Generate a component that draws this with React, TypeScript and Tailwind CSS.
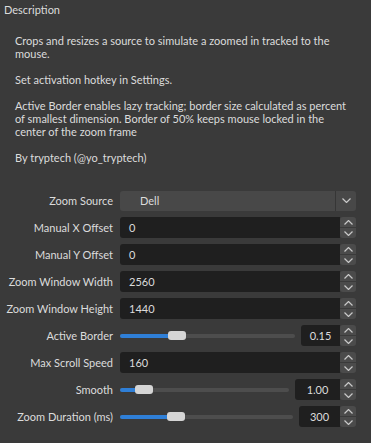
import React from "react"

const descLines: string[][] = [
  ["Crops and resizes a source to simulate a zoomed in tracked to the", "mouse."],
  ["Set activation hotkey in Settings."],
  [
    "Active Border enables lazy tracking; border size calculated as percent",
    "of smallest dimension. Border of 50% keeps mouse locked in the",
    "center of the zoom frame",
  ],
  ["By tryptech (@yo_tryptech)"],
]

function Chevron({ up }: { up?: boolean }) {
  return (
    <svg width="9" height="5" viewBox="0 0 9 5" className="block">
      <polyline
        points={up ? "0.5,4.5 4.5,0.5 8.5,4.5" : "0.5,0.5 4.5,4.5 8.5,0.5"}
        fill="none"
        stroke="#c9c9c9"
        strokeWidth="1.2"
      />
    </svg>
  )
}

function SpinButtons() {
  return (
    <div className="flex flex-col w-[16px] h-[21px] gap-[1px]">
      <div className="flex-1 bg-[#4b4b4b] rounded-t-[3px] flex items-center justify-center">
        <Chevron up />
      </div>
      <div className="flex-1 bg-[#4b4b4b] rounded-b-[3px] flex items-center justify-center">
        <Chevron />
      </div>
    </div>
  )
}

function Row({ label, children }: { label: string; children: React.ReactNode }) {
  return (
    <div className="flex items-center h-[21px]">
      <div className="w-[113px] text-right whitespace-nowrap">{label}</div>
      <div className="ml-[7px] w-[236px] flex items-center h-full">{children}</div>
    </div>
  )
}

function SpinBox({ value }: { value: string }) {
  return (
    <>
      <div className="flex-1 h-full bg-[#1f1f1f] rounded-l-[3px] flex items-center pl-[9px]">{value}</div>
      <SpinButtons />
    </>
  )
}

function SliderRow({ value, boxWidth, pos }: { value: string; boxWidth: number; pos: number }) {
  return (
    <>
      <div className="flex-1 relative h-full flex items-center">
        <div className="w-full h-[4px] rounded-full bg-[#4d4d4d]" />
        <div className="absolute left-0 h-[4px] rounded-l-full bg-[#2f7fd7]" style={{ width: pos + 2 }} />
        <div
          className="absolute h-[9px] w-[18px] rounded-[3px] bg-[#d5d5d5]"
          style={{ left: pos }}
        />
      </div>
      <div
        className="ml-[6px] h-full bg-[#1f1f1f] rounded-l-[3px] flex items-center justify-center"
        style={{ width: boxWidth }}
      >
        {value}
      </div>
      <SpinButtons />
    </>
  )
}

export default function App() {
  return (
    <div className="w-[371px] h-[443px] bg-[#3a3a3a] overflow-hidden text-[11px] leading-[13px] text-[#dcdcdc] font-['Lato',sans-serif]">
      <div className="pl-[4px] pt-[3px] h-[34px]">Description</div>
      <div className="pl-[15px] flex flex-col gap-[13px]">
        {descLines.map((p, i) => (
          <div key={i}>
            {p.map((l, j) => (
              <div key={j} className="whitespace-nowrap">
                {l}
              </div>
            ))}
          </div>
        ))}
      </div>
      <div className="mt-[26px] flex flex-col gap-[6px]">
        <Row label="Zoom Source">
          <div className="flex-1 h-[20px] bg-[#484848] rounded-[3px] flex items-center">
            <div className="flex-1 pl-[20px]">Dell</div>
            <div className="w-[21px] h-full border-l border-[#363636] flex items-center justify-center">
              <Chevron />
            </div>
          </div>
        </Row>
        <Row label="Manual X Offset">
          <SpinBox value="0" />
        </Row>
        <Row label="Manual Y Offset">
          <SpinBox value="0" />
        </Row>
        <Row label="Zoom Window Width">
          <SpinBox value="2560" />
        </Row>
        <Row label="Zoom Window Height">
          <SpinBox value="1440" />
        </Row>
        <Row label="Active Border">
          <SliderRow value="0.15" boxWidth={39} pos={48} />
        </Row>
        <Row label="Max Scroll Speed">
          <SpinBox value="160" />
        </Row>
        <Row label="Smooth">
          <SliderRow value="1.00" boxWidth={45} pos={15} />
        </Row>
        <Row label="Zoom Duration (ms)">
          <SliderRow value="300" boxWidth={41} pos={47} />
        </Row>
      </div>
    </div>
  )
}
